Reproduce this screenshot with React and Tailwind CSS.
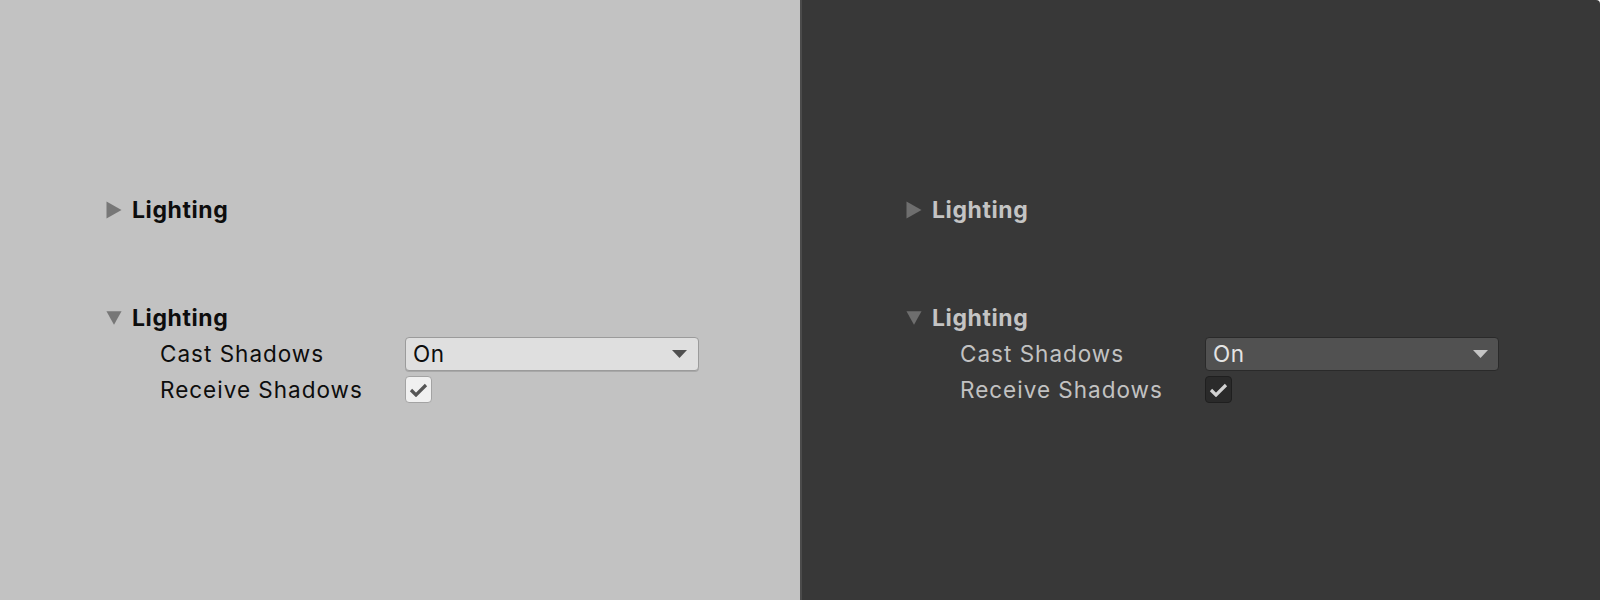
import React from "react";

function TriRight({ color }) {
  return (
    <svg width="16" height="18" viewBox="0 0 16 18">
      <polygon points="0.5,0.5 15.5,9 0.5,17.5" fill={color} />
    </svg>
  );
}
function TriDown({ color }) {
  return (
    <svg width="18" height="16" viewBox="0 0 18 16">
      <polygon points="0.5,0.5 17.5,0.5 9,15.5" fill={color} />
    </svg>
  );
}

function Panel({ dark }) {
  const tri = dark ? "#6e6e6e" : "#777777";
  const head = dark
    ? "ml-[10px] text-[23px] font-bold tracking-[0.6px] text-[#c4c4c4]"
    : "ml-[10px] text-[23px] font-bold tracking-[0.6px] text-[#0d0d0d]";
  const label = dark
    ? "w-[245px] text-[22.5px] tracking-[1px] text-[#c2c2c2]"
    : "w-[245px] text-[22.5px] tracking-[1px] text-[#0d0d0d]";
  return (
    <div
      className={
        dark
          ? "w-[800px] h-[600px] bg-[#383838] border-l-2 border-[#4b4b4b] pl-[104px] pt-[196px] rounded-tr-[4px]"
          : "w-[800px] h-[600px] bg-[#c2c2c2] pl-[106px] pt-[196px]"
      }
    >
      <div className="flex items-center h-[28px]">
        <div className="w-[16px] flex items-center justify-center">
          <TriRight color={tri} />
        </div>
        <span className={head}>Lighting</span>
      </div>

      <div className="flex items-center h-[28px] mt-[80px]">
        <div className="w-[16px] flex items-center justify-center">
          <TriDown color={tri} />
        </div>
        <span className={head}>Lighting</span>
      </div>

      <div className="flex items-center mt-[5px] pl-[54px]">
        <span className={label}>Cast Shadows</span>
        <div
          className={
            dark
              ? "w-[294px] h-[34px] rounded-[4px] bg-[#515151] border border-[#2a2a2a] flex items-center justify-between pl-[7px] pr-[10px]"
              : "w-[294px] h-[34px] rounded-[4px] bg-[#dfdfdf] border border-[#9b9b9b] shadow-[0_1px_0_#a8a8a8] flex items-center justify-between pl-[7px] pr-[11px]"
          }
        >
          <span
            className={
              dark
                ? "text-[22.5px] tracking-[0.5px] text-[#e4e4e4]"
                : "text-[22.5px] tracking-[0.5px] text-[#0d0d0d]"
            }
          >
            On
          </span>
          <svg width="15" height="8" viewBox="0 0 15 8">
            <polygon
              points="0,0 15,0 7.5,8"
              fill={dark ? "#c4c4c4" : "#4f4f4f"}
            />
          </svg>
        </div>
      </div>

      <div className="flex items-center mt-[2px] pl-[54px]">
        <span className={label}>Receive Shadows</span>
        <div
          className={
            dark
              ? "w-[27px] h-[27px] rounded-[4px] bg-[#2a2a2a] border border-[#1f1f1f] flex items-center justify-center"
              : "w-[27px] h-[27px] rounded-[4px] bg-[#f0f0f0] border border-[#a3a3a3] flex items-center justify-center"
          }
        >
          <svg width="19" height="14" viewBox="0 0 19 14">
            <polyline
              points="2,7 7,12 17,2"
              fill="none"
              stroke={dark ? "#d2d2d2" : "#555555"}
              strokeWidth="3.2"
            />
          </svg>
        </div>
      </div>
    </div>
  );
}

export default function App() {
  return (
    <div className="flex w-[1600px] h-[600px] font-['Inter',sans-serif]">
      <Panel />
      <Panel dark />
    </div>
  );
}
